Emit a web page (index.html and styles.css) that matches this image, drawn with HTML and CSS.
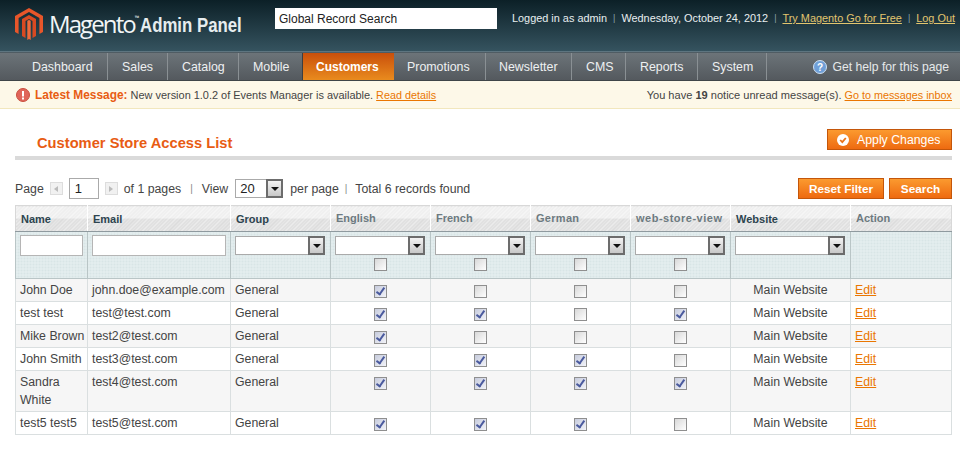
FILE: index.html
```html
<!DOCTYPE html>
<html lang="en">
<head>
<meta charset="utf-8">
<title>Customer Store Access List</title>
<link rel="stylesheet" href="styles.css">
</head>
<body>
<header class="top">
  <div class="logo">
    <svg class="logo-mark" width="28" height="32" viewBox="0 0 28 32"><path fill="#e8562a" d="M14 0 28 8v16l-3.600 2V10L14 4 3.600 10v16L0 24V8z"/><path fill="#d94a22" d="M14 7 21 11v17l-3.500 2V13L14 11 10.500 13v17L7 28V11z"/><path fill="#f0693a" d="M12.300 12.800 14 12l1.700.8V32l-1.700-1-1.700 1z"/></svg>
    <span class="logo-name">Magento<sup class="tm">™</sup></span>
    <span class="logo-sub">Admin Panel</span>
  </div>
  <input class="search" type="text" value="Global Record Search">
  <div class="user">
    <span>Logged in as admin</span><i>|</i><span>Wednesday, October 24, 2012</span><i>|</i><a href="#" class="gold">Try Magento Go for Free</a><i>|</i><a href="#" class="gold">Log Out</a>
  </div>
</header>
<nav class="nav">
  <a href="#" class="nav-item n-dash">Dashboard</a>
  <a href="#" class="nav-item n-sales">Sales</a>
  <a href="#" class="nav-item n-cat">Catalog</a>
  <a href="#" class="nav-item n-mob">Mobile</a>
  <a href="#" class="nav-item active">Customers</a>
  <a href="#" class="nav-item n-promo">Promotions</a>
  <a href="#" class="nav-item n-news">Newsletter</a>
  <a href="#" class="nav-item n-cms">CMS</a>
  <a href="#" class="nav-item n-rep">Reports</a>
  <a href="#" class="nav-item n-sys">System</a>
  <a href="#" class="help">
    <svg width="14" height="14" viewBox="0 0 14 14"><circle cx="7" cy="7" r="6.500" fill="#6f9fd8" stroke="#cfe0f2"/><text x="7" y="10.500" text-anchor="middle" class="help-q">?</text></svg>
    <span>Get help for this page</span>
  </a>
</nav>
<div class="notice">
  <div class="notice-left">
    <svg width="14" height="14" viewBox="0 0 14 14"><circle cx="7" cy="7" r="6.500" fill="#e0655a" stroke="#c9503f"/><rect x="6" y="3" width="2" height="5.500" fill="#fff"/><rect x="6" y="9.500" width="2" height="2" fill="#fff"/></svg>
    <b>Latest Message:</b><span class="msg">New version 1.0.2 of Events Manager is available.</span><a href="#">Read details</a>
  </div>
  <div class="notice-right"><span class="msg msg-r">You have <strong>19</strong> notice unread message(s).</span> <a href="#">Go to messages inbox</a></div>
</div>
<main class="content">
  <div class="head">
    <h3>Customer Store Access List</h3>
    <button class="btn btn-apply" type="button"><svg width="12" height="12" viewBox="0 0 12 12"><circle cx="6" cy="6" r="6" fill="#fff"/><path d="M3.200 6 5.300 8.200 8.800 4" fill="none" stroke="#e9741a" stroke-width="1.800"/></svg>Apply Changes</button>
  </div>
  <div class="bar">
    <div class="pager">
      <span>Page</span>
      <span class="arrow-btn"><span class="tri-l"></span></span>
      <input class="page-input" type="text" value="1">
      <span class="arrow-btn"><span class="tri-r"></span></span>
      <span>of 1 pages</span>
      <i>|</i>
      <span>View</span>
      <div class="sel sel-view"><select><option>20</option></select><span class="sel-arrow"></span></div>
      <span>per page</span>
      <i class="tight">|</i>
      <span>Total 6 records found</span>
    </div>
    <div class="actions">
      <button class="btn" type="button">Reset Filter</button>
      <button class="btn" type="button">Search</button>
    </div>
  </div>
  <table class="grid">
    <colgroup>
      <col class="c-name"><col class="c-email"><col class="c-std"><col class="c-std"><col class="c-std"><col class="c-std"><col class="c-std"><col class="c-site"><col class="c-act">
    </colgroup>
    <thead>
      <tr class="titles">
        <th>Name</th><th>Email</th><th>Group</th>
        <th class="off">English</th><th class="off">French</th><th class="off german">German</th><th class="off wsv">web-store-view</th>
        <th>Website</th><th class="off">Action</th>
      </tr>
      <tr class="filters">
        <td><input class="f-input" type="text"></td>
        <td><input class="f-input" type="text"></td>
        <td><div class="sel"><select></select><span class="sel-arrow"></span></div></td>
        <td><div class="sel"><select></select><span class="sel-arrow"></span></div><input class="cb cb-f" type="checkbox"></td>
        <td><div class="sel"><select></select><span class="sel-arrow"></span></div><input class="cb cb-f" type="checkbox"></td>
        <td><div class="sel"><select></select><span class="sel-arrow"></span></div><input class="cb cb-f" type="checkbox"></td>
        <td><div class="sel"><select></select><span class="sel-arrow"></span></div><input class="cb cb-f" type="checkbox"></td>
        <td><div class="sel sel-wide"><select></select><span class="sel-arrow"></span></div></td>
        <td></td>
      </tr>
    </thead>
    <tbody>
      <tr class="even"><td>John Doe</td><td>john.doe@example.com</td><td>General</td><td class="ck"><input class="cb" type="checkbox" checked></td><td class="ck"><input class="cb" type="checkbox"></td><td class="ck"><input class="cb" type="checkbox"></td><td class="ck"><input class="cb" type="checkbox"></td><td class="site">Main Website</td><td><a href="#">Edit</a></td></tr>
      <tr><td>test test</td><td>test@test.com</td><td>General</td><td class="ck"><input class="cb" type="checkbox" checked></td><td class="ck"><input class="cb" type="checkbox" checked></td><td class="ck"><input class="cb" type="checkbox"></td><td class="ck"><input class="cb" type="checkbox" checked></td><td class="site">Main Website</td><td><a href="#">Edit</a></td></tr>
      <tr class="even"><td>Mike Brown</td><td>test2@test.com</td><td>General</td><td class="ck"><input class="cb" type="checkbox" checked></td><td class="ck"><input class="cb" type="checkbox"></td><td class="ck"><input class="cb" type="checkbox"></td><td class="ck"><input class="cb" type="checkbox"></td><td class="site">Main Website</td><td><a href="#">Edit</a></td></tr>
      <tr><td>John Smith</td><td>test3@test.com</td><td>General</td><td class="ck"><input class="cb" type="checkbox" checked></td><td class="ck"><input class="cb" type="checkbox" checked></td><td class="ck"><input class="cb" type="checkbox" checked></td><td class="ck"><input class="cb" type="checkbox"></td><td class="site">Main Website</td><td><a href="#">Edit</a></td></tr>
      <tr class="even"><td>Sandra White</td><td>test4@test.com</td><td>General</td><td class="ck"><input class="cb" type="checkbox" checked></td><td class="ck"><input class="cb" type="checkbox" checked></td><td class="ck"><input class="cb" type="checkbox" checked></td><td class="ck"><input class="cb" type="checkbox" checked></td><td class="site">Main Website</td><td><a href="#">Edit</a></td></tr>
      <tr><td>test5 test5</td><td>test5@test.com</td><td>General</td><td class="ck"><input class="cb" type="checkbox" checked></td><td class="ck"><input class="cb" type="checkbox" checked></td><td class="ck"><input class="cb" type="checkbox" checked></td><td class="ck"><input class="cb" type="checkbox"></td><td class="site">Main Website</td><td><a href="#">Edit</a></td></tr>
    </tbody>
  </table>
</main>
</body>
</html>
```
FILE: styles.css
```css
* { box-sizing: border-box; }
html, body { margin: 0; padding: 0; }
body { width: 960px; height: 451px; overflow: hidden; background: #fff; font: 12.300px/18px "Liberation Sans", Arial, sans-serif; color: #444; }
a { color: #ea7601; }

.top { height: 52px; display: flex; align-items: flex-start; background: linear-gradient(#0c2027, #35535f); border-bottom: 1px solid #5d7580; color: #e8eef0; }
.logo { width: 275px; padding: 8px 0 0 15px; display: flex; align-items: flex-start; flex: none; }
.logo-mark { flex: none; }
.logo-name { font: 400 24px/32px "Open Sans", sans-serif; color: #f3f6f7; margin-left: 6px; letter-spacing: -1.900px; flex: none; }
.tm { font-size: 6px; line-height: 0; vertical-align: 13px; letter-spacing: 0; }
.logo-sub { font: 700 20px/32px "Liberation Sans", sans-serif; color: #e7edef; margin: 1px 0 0 1px; white-space: nowrap; transform: scaleX(.84); transform-origin: left center; }
.search { width: 222px; height: 21px; margin-top: 8px; flex: none; border: 0; padding: 0 4px; background: #fff; font: 12px "Liberation Sans", sans-serif; color: #222; }
.user { margin: 9px 0 0 15px; display: flex; font-size: 10.900px; white-space: nowrap; line-height: 18px; }
.user i { font-style: normal; margin: 0 6px; color: #8aa0a8; font-size: 9px; }
.gold { color: #e2c56e; }

.nav { height: 29px; display: flex; padding-left: 18px; background: linear-gradient(#6c7479, #54595e); border-bottom: 1px solid #3f4548; border-top: 1px solid #4f5c63; }
.nav-item { flex: none; height: 27px; padding: 0 0 0 14px; border-right: 1px solid #8a9094; font: 12.400px/29px "Liberation Sans", sans-serif; color: #eef0f1; text-decoration: none; white-space: nowrap; }
.n-dash { width: 90px; }
.n-sales { width: 60px; }
.n-cat { width: 71px; }
.n-mob { width: 64px; border-right-color: #3b3f42; }
.n-promo { width: 92px; padding-left: 13px; }
.n-news { width: 86px; padding-left: 13px; }
.n-cms { width: 54px; }
.n-rep { width: 72px; }
.n-sys { width: 69px; }
.active { width: 91px; padding-left: 13px; background: linear-gradient(#c94f0b, #e98b1e); font-size: 12px; font-weight: 700; color: #fff; border-right: 0; }
.help { margin-left: auto; margin-right: 11px; display: flex; align-items: center; gap: 5px; color: #e6e9ea; text-decoration: none; font-size: 12.200px; height: 27px; }
.help-q { font: 700 10px "Liberation Sans", sans-serif; fill: #fff; }

.notice { height: 28px; display: flex; justify-content: space-between; align-items: center; padding: 0 8px 0 16px; background: #fdf8e8; border-bottom: 1px solid #f2e7bd; font-size: 10.800px; color: #444; }
.notice-left { display: flex; align-items: center; gap: 3px; white-space: pre; }
.notice-left svg { margin-right: 2px; }
.notice-left b { color: #e85c13; font-size: 11.900px; }
.msg { font-size: 10.950px; }
.msg-r { font-size: 11.050px; }
.notice a { color: #ea7601; }

.content { padding: 0 8px 0 15px; }
.head { height: 51px; padding: 20px 0 0 22px; display: flex; justify-content: space-between; align-items: flex-start; border-bottom: 4px solid #dadada; }
.head h3 { margin: 5px 0 0; font: 700 14.700px/18px "Liberation Sans", sans-serif; color: #e85c13; }
.btn { height: 21px; padding: 0 7px 0 8px; border: 1px solid #c4560a; background: linear-gradient(#fb9a2f, #ee6a10); color: #fff; font: 700 11.800px/18px "Liberation Sans", sans-serif; display: inline-flex; align-items: center; }
.btn-apply { width: 125px; padding-left: 9px; gap: 8px; font-size: 12.300px; font-weight: 400; white-space: nowrap; }

.bar { height: 45px; padding-top: 18px; display: flex; justify-content: space-between; align-items: flex-start; }
.pager { display: flex; align-items: center; height: 21px; white-space: nowrap; gap: 6px; }
.pager i { font-style: normal; margin: 0 3px; color: #888; font-size: 10px; }
.pager i.tight { margin: 0 2px 0 0; }
.arrow-btn { width: 13px; height: 13px; border: 1px solid #ddd; background: #f1f1f1; display: flex; align-items: center; justify-content: center; }
.tri-l { border: 3px solid transparent; border-right: 4px solid #bbb; border-left: 0; }
.tri-r { border: 3px solid transparent; border-left: 4px solid #bbb; border-right: 0; }
.page-input { width: 30px; height: 21px; border: 1px solid #aaa; padding: 2px 5px; font: 13px "Liberation Sans", sans-serif; color: #222; background: #fff; }
.actions { display: flex; gap: 5px; }
.actions .btn:first-child { width: 86px; justify-content: center; padding: 0; }
.actions .btn:last-child { width: 63px; justify-content: center; padding: 0; }

.sel { display: flex; width: 90px; height: 19px; background: #fff; border: 1px solid #aaa; border-right: 0; }
.sel select { flex: 1; min-width: 0; appearance: none; border: 0; background: transparent; padding: 0 4px; font: 13px "Liberation Sans", sans-serif; color: #222; outline: 0; }
.sel-arrow { flex: none; width: 17px; margin: -1px 0; border: 2px solid #6c6c6c; background: linear-gradient(#f2f2f2, #c8c8c8); display: flex; align-items: center; justify-content: center; }
.sel-arrow::after { content: ""; border: 4px solid transparent; border-top: 4px solid #111; border-bottom: 0; }
.sel-view { width: 48px; margin: 0 1px; }
.sel-wide { width: 110px; }

.grid { width: 936px; table-layout: fixed; border-collapse: collapse; }
.c-name { width: 72px; }
.c-email { width: 143px; }
.c-std { width: 100px; }
.c-site { width: 120px; }
.c-act { width: 101px; }
.grid th, .grid td { border: 1px solid #dadfe0; vertical-align: top; }
.titles th { height: 26px; padding: 6px 5px 0; text-align: left; font: 700 11px/14px "Liberation Sans", sans-serif; color: #2d444f; border-color: #d8d8d8 #fff #8f9a9f #fff; white-space: nowrap; background: repeating-linear-gradient(135deg, rgba(255,255,255,.55) 0 1px, transparent 1px 2.500px), linear-gradient(#eeeeee 50%, #dcdcdc 50%); }
.titles th:first-child { border-left-color: #d8d8d8; }
.titles th:last-child { border-right-color: #d8d8d8; }
.titles th.off { padding-top: 5px; color: #6d7a80; font-weight: 700; }
.titles th.german { letter-spacing: .3px; }
.titles th.wsv { letter-spacing: .5px; }
.filters td { height: 47px; padding: 3px 4px 0; background-color: #d8e5e6; background-image: linear-gradient(#e6eff0 1px, transparent 1px), linear-gradient(90deg, #e6eff0 1px, transparent 1px); background-size: 3px 3px; border-color: #b9c5c6; }
.f-input { display: block; width: 100%; height: 21px; border: 1px solid #b5b5b5; background: #fff; padding: 0 3px; }
.filters .sel { margin-top: 1px; }
.cb { appearance: none; display: block; width: 13px; height: 13px; margin: 0 auto; border: 1px solid #8f8f8f; background: linear-gradient(135deg, #d8d8d8, #fff); }
.cb:checked { background: linear-gradient(135deg, #c6cbdc, #f2f3f8); }
.cb:checked::after { content: ""; display: block; width: 3px; height: 7px; margin: 0 0 0 3px; border: solid #4a5a9e; border-width: 0 2px 2px 0; transform: rotate(35deg); }
.cb-f { margin-top: 3px; }
.grid tbody td { height: 23px; padding: 2px 4px; }
.grid tbody td:first-child { padding-right: 1px; }
.grid tbody tr.even td { background: #f6f6f6; }
.grid tbody td.ck { padding-top: 6px; }
.site { text-align: center; }
```
